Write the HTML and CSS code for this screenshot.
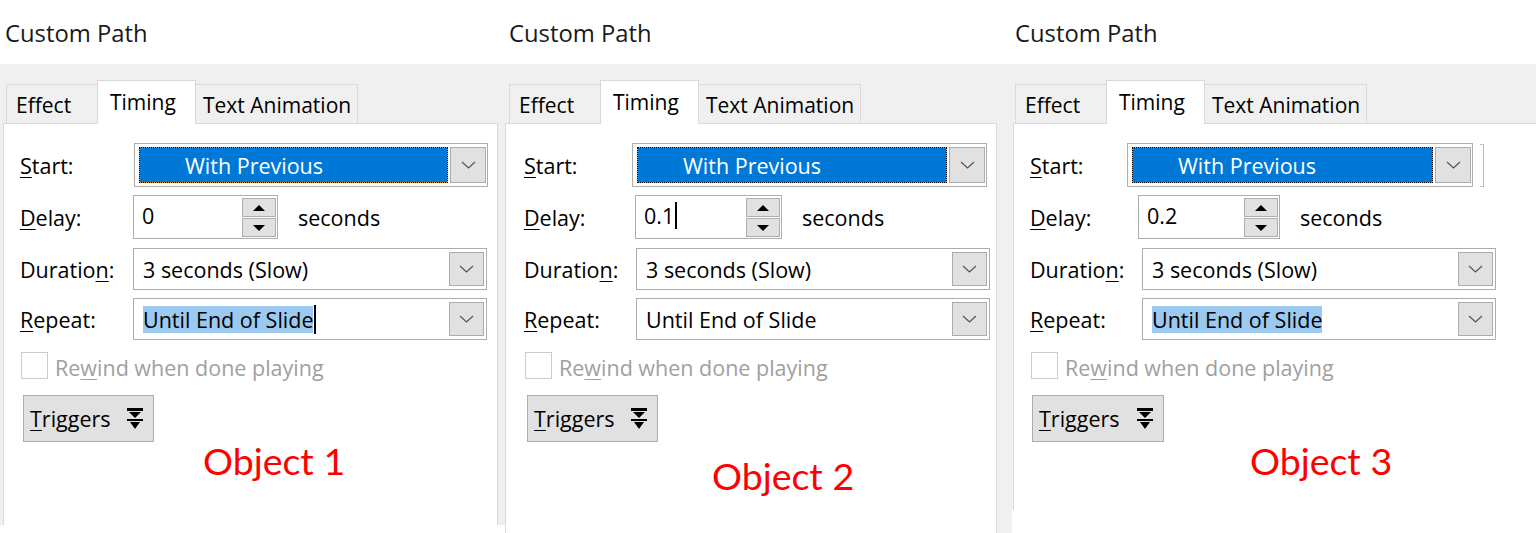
FILE: index.html
```html
<!DOCTYPE html>
<html lang="en">
<head>
<meta charset="utf-8">
<title>Custom Path – Timing</title>
<link rel="stylesheet" href="styles.css">
</head>
<body>
<div class="screen">

  <section class="panel p1">
    <h1 class="title">Custom Path</h1>
    <div class="dialog">
      <div class="tabs">
        <div class="tab tab-effect">Effect</div>
        <div class="tab tab-timing active">Timing</div>
        <div class="tab tab-text">Text Animation</div>
      </div>
      <div class="content">
        <div class="row r-start">
          <span class="lbl"><u>S</u>tart:</span>
          <div class="combo focus">
            <div class="field">With Previous</div>
            <div class="dd-btn"><svg width="15" height="8" viewBox="0 0 15 8"><polyline points="1,1 7.5,7 14,1" fill="none" stroke="#555" stroke-width="1.2"/></svg></div>
          </div>
        </div>
        <div class="row r-delay">
          <span class="lbl"><u>D</u>elay:</span>
          <div class="spin">
            <div class="spin-val">0</div>
            <div class="spin-btns">
              <div class="sb"><svg width="12" height="6" viewBox="0 0 12 6"><polygon points="0,6 12,6 6,0" fill="#000"/></svg></div>
              <div class="sb"><svg width="12" height="6" viewBox="0 0 12 6"><polygon points="0,0 12,0 6,6" fill="#000"/></svg></div>
            </div>
          </div>
          <span class="unit">seconds</span>
        </div>
        <div class="row r-dur">
          <span class="lbl">Duratio<u>n</u>:</span>
          <div class="combo plain">
            <div class="val">3 seconds (Slow)</div>
            <div class="dd-btn"><svg width="15" height="8" viewBox="0 0 15 8"><polyline points="1,1 7.5,7 14,1" fill="none" stroke="#555" stroke-width="1.2"/></svg></div>
          </div>
        </div>
        <div class="row r-rep">
          <span class="lbl"><u>R</u>epeat:</span>
          <div class="combo plain">
            <div class="val"><span class="hl">Until End of Slide</span><span class="caret"></span></div>
            <div class="dd-btn"><svg width="15" height="8" viewBox="0 0 15 8"><polyline points="1,1 7.5,7 14,1" fill="none" stroke="#555" stroke-width="1.2"/></svg></div>
          </div>
        </div>
        <div class="check-row">
          <span class="cb"></span>
          <span class="cb-lbl">Re<u>w</u>ind when done playing</span>
        </div>
        <div class="triggers"><span><u>T</u>riggers</span><svg width="16" height="21" viewBox="0 0 16 21"><rect x="0" y="0" width="16" height="3" fill="#000"/><polygon points="2,4 14,4 8,10" fill="#000"/><rect x="0" y="11" width="16" height="2" fill="#000"/><polygon points="3,14 13,14 8,21" fill="#000"/></svg></div>
        <div class="obj">Object 1</div>
      </div>
    </div>
  </section>

  <section class="panel p2">
    <h1 class="title">Custom Path</h1>
    <div class="dialog">
      <div class="tabs">
        <div class="tab tab-effect">Effect</div>
        <div class="tab tab-timing active">Timing</div>
        <div class="tab tab-text">Text Animation</div>
      </div>
      <div class="content">
        <div class="row r-start">
          <span class="lbl"><u>S</u>tart:</span>
          <div class="combo focus">
            <div class="field">With Previous</div>
            <div class="dd-btn"><svg width="15" height="8" viewBox="0 0 15 8"><polyline points="1,1 7.5,7 14,1" fill="none" stroke="#555" stroke-width="1.2"/></svg></div>
          </div>
        </div>
        <div class="row r-delay">
          <span class="lbl"><u>D</u>elay:</span>
          <div class="spin">
            <div class="spin-val">0.1<span class="caret"></span></div>
            <div class="spin-btns">
              <div class="sb"><svg width="12" height="6" viewBox="0 0 12 6"><polygon points="0,6 12,6 6,0" fill="#000"/></svg></div>
              <div class="sb"><svg width="12" height="6" viewBox="0 0 12 6"><polygon points="0,0 12,0 6,6" fill="#000"/></svg></div>
            </div>
          </div>
          <span class="unit">seconds</span>
        </div>
        <div class="row r-dur">
          <span class="lbl">Duratio<u>n</u>:</span>
          <div class="combo plain">
            <div class="val">3 seconds (Slow)</div>
            <div class="dd-btn"><svg width="15" height="8" viewBox="0 0 15 8"><polyline points="1,1 7.5,7 14,1" fill="none" stroke="#555" stroke-width="1.2"/></svg></div>
          </div>
        </div>
        <div class="row r-rep">
          <span class="lbl"><u>R</u>epeat:</span>
          <div class="combo plain">
            <div class="val">Until End of Slide</div>
            <div class="dd-btn"><svg width="15" height="8" viewBox="0 0 15 8"><polyline points="1,1 7.5,7 14,1" fill="none" stroke="#555" stroke-width="1.2"/></svg></div>
          </div>
        </div>
        <div class="check-row">
          <span class="cb"></span>
          <span class="cb-lbl">Re<u>w</u>ind when done playing</span>
        </div>
        <div class="triggers"><span><u>T</u>riggers</span><svg width="16" height="21" viewBox="0 0 16 21"><rect x="0" y="0" width="16" height="3" fill="#000"/><polygon points="2,4 14,4 8,10" fill="#000"/><rect x="0" y="11" width="16" height="2" fill="#000"/><polygon points="3,14 13,14 8,21" fill="#000"/></svg></div>
        <div class="obj">Object 2</div>
      </div>
    </div>
  </section>

  <section class="panel p3">
    <h1 class="title">Custom Path</h1>
    <div class="dialog">
      <div class="tabs">
        <div class="tab tab-effect">Effect</div>
        <div class="tab tab-timing active">Timing</div>
        <div class="tab tab-text">Text Animation</div>
      </div>
      <div class="content">
        <div class="row r-start">
          <span class="lbl"><u>S</u>tart:</span>
          <div class="combo focus">
            <div class="field">With Previous</div>
            <div class="dd-btn"><svg width="15" height="8" viewBox="0 0 15 8"><polyline points="1,1 7.5,7 14,1" fill="none" stroke="#555" stroke-width="1.2"/></svg></div>
          </div>
          <span class="bracket"></span>
        </div>
        <div class="row r-delay">
          <span class="lbl"><u>D</u>elay:</span>
          <div class="spin">
            <div class="spin-val">0.2</div>
            <div class="spin-btns">
              <div class="sb"><svg width="12" height="6" viewBox="0 0 12 6"><polygon points="0,6 12,6 6,0" fill="#000"/></svg></div>
              <div class="sb"><svg width="12" height="6" viewBox="0 0 12 6"><polygon points="0,0 12,0 6,6" fill="#000"/></svg></div>
            </div>
          </div>
          <span class="unit">seconds</span>
        </div>
        <div class="row r-dur">
          <span class="lbl">Duratio<u>n</u>:</span>
          <div class="combo plain">
            <div class="val">3 seconds (Slow)</div>
            <div class="dd-btn"><svg width="15" height="8" viewBox="0 0 15 8"><polyline points="1,1 7.5,7 14,1" fill="none" stroke="#555" stroke-width="1.2"/></svg></div>
          </div>
        </div>
        <div class="row r-rep">
          <span class="lbl"><u>R</u>epeat:</span>
          <div class="combo plain">
            <div class="val"><span class="hl">Until End of Slide</span></div>
            <div class="dd-btn"><svg width="15" height="8" viewBox="0 0 15 8"><polyline points="1,1 7.5,7 14,1" fill="none" stroke="#555" stroke-width="1.2"/></svg></div>
          </div>
        </div>
        <div class="check-row">
          <span class="cb"></span>
          <span class="cb-lbl">Re<u>w</u>ind when done playing</span>
        </div>
        <div class="triggers"><span><u>T</u>riggers</span><svg width="16" height="21" viewBox="0 0 16 21"><rect x="0" y="0" width="16" height="3" fill="#000"/><polygon points="2,4 14,4 8,10" fill="#000"/><rect x="0" y="11" width="16" height="2" fill="#000"/><polygon points="3,14 13,14 8,21" fill="#000"/></svg></div>
        <div class="obj">Object 3</div>
      </div>
    </div>
  </section>

</div>
</body>
</html>
```

FILE: styles.css
```css
* { box-sizing: border-box; }

body {
  margin: 0;
  background: #fff;
  font-family: "Open Sans", "Noto Sans", sans-serif;
  color: #000;
}

.screen {
  display: flex;
  width: 1536px;
  height: 533px;
  overflow: hidden;
}

.panel {
  display: flex;
  flex-direction: column;
  flex: none;
}
.p1 { width: 505px; }
.p2 { width: 507px; }
.p3 { width: 524px; }

.title {
  margin: 0;
  height: 64px;
  font-weight: 400;
  font-size: 23.8px;
  line-height: 66px;
  color: #1a1a1a;
  padding-left: 5px;
  white-space: nowrap;
}
.p2 .title { padding-left: 4px; }
.p3 .title { padding-left: 3px; }

.dialog {
  background: #f0f0f0;
  display: flex;
  flex-direction: column;
  flex: none;
}
.p1 .dialog { height: 461px; }
.p2 .dialog { height: 469px; }
.p3 .dialog { height: 446px; }

/* tabs */
.tabs {
  display: flex;
  align-items: flex-end;
  height: 59px;
  flex: none;
  padding-left: 6px;
}
.p2 .tabs { padding-left: 4px; }
.p3 .tabs { padding-left: 3px; }

.tab {
  height: 39px;
  border: 1px solid #d9d9d9;
  border-bottom: none;
  font-size: 21px;
  line-height: 40px;
  white-space: nowrap;
  color: #000;
  background: #f0f0f0;
}
.tab-effect { width: 91px; padding-left: 9px; border-right: none; }
.tab-timing { width: 99px; padding-left: 12px; }
.tab-text { width: 162px; padding-left: 7px; border-left: none; }

.tab.active {
  height: 44px;
  background: #fff;
  margin-bottom: -1px;
  position: relative;
  line-height: 42px;
}

/* content */
.content {
  flex: 1;
  background: #fff;
  border: 1px solid #d9d9d9;
  border-bottom: none;
  padding: 19px 0 0 16px;
}
.p1 .content { margin-left: 3px; width: 495px; }
.p2 .content { width: 492px; padding-left: 18px; }
.p3 .content { margin-left: 1px; width: 523px; border-right: none; }

.row {
  display: flex;
  align-items: center;
}
.lbl {
  width: 113px;
  flex: none;
  font-size: 21.5px;
  white-space: nowrap;
  padding-top: 1px;
}
.p2 .lbl, .p3 .lbl { width: 112px; }

u { text-underline-offset: 3px; text-decoration-thickness: 1px; }

.r-delay { margin-top: 8px; }
.r-dur { margin-top: 9px; }
.r-rep { margin-top: 8px; }

/* combos */
.combo {
  display: flex;
  height: 42px;
  width: 354px;
  border: 1px solid #adadad;
  background: #fff;
  padding: 3px 2px 3px 9px;
  gap: 2px;
  font-size: 21.5px;
}
.combo.focus {
  height: 44px;
  padding: 3px 1px 3px 4px;
  margin-left: 1px;
}
.p2 .combo.focus { margin-left: -4px; width: 355px; }
.p3 .combo.focus { margin-left: -15px; width: 346px; }

.field {
  flex: 1;
  background: #0078d7;
  color: #fff;
  border: 1px solid #e8912e;
  outline: 1px dotted #000;
  outline-offset: -1px;
  padding-left: 45px;
  padding-top: 3px;
  line-height: 30px;
  white-space: nowrap;
}

.dd-btn {
  width: 36px;
  flex: none;
  background: #e1e1e1;
  border: 1px solid #adadad;
  display: flex;
  align-items: center;
  justify-content: center;
}
.plain .dd-btn { width: 35px; }

.val {
  flex: 1;
  display: flex;
  align-items: center;
  white-space: nowrap;
  line-height: 27px;
}
.hl { background: #9bc9f0; }
.caret {
  display: inline-block;
  width: 2px;
  height: 29px;
  background: #000;
  margin-left: 1px;
}

/* spinner */
.spin {
  display: flex;
  width: 145px;
  height: 44px;
  border: 1px solid #adadad;
  background: #fff;
  padding: 2px 1px 1px 8px;
}
.p2 .spin { margin-left: -1px; width: 147px; }
.p3 .spin { margin-left: -4px; width: 142px; }

.spin-val {
  flex: 1;
  font-size: 21.5px;
  display: flex;
  align-items: center;
  line-height: 27px;
  padding-bottom: 5px;
}
.spin-val .caret { height: 27px; }

.spin-btns {
  width: 34px;
  flex: none;
  display: flex;
  flex-direction: column;
  gap: 1px;
}
.sb {
  flex: 1;
  background: #e1e1e1;
  border: 1px solid #adadad;
  display: flex;
  align-items: center;
  justify-content: center;
}

.unit {
  margin-left: 20px;
  font-size: 21.5px;
  padding-top: 1px;
}

.bracket {
  width: 4px;
  height: 43px;
  margin-left: 7px;
  border: 1px solid #bdbdbd;
  border-left: none;
}

/* checkbox */
.check-row {
  display: flex;
  align-items: center;
  margin-top: 12px;
  height: 27px;
}
.cb {
  width: 27px;
  height: 27px;
  flex: none;
  border: 1px solid #cccccc;
  background: #fff;
  margin-left: 1px;
  margin-right: 7px;
}
.cb-lbl {
  font-size: 21.5px;
  color: #a0a0a0;
  white-space: nowrap;
  padding-top: 4px;
}

/* triggers */
.triggers {
  margin-top: 16px;
  margin-left: 3px;
  width: 131px;
  height: 47px;
  border: 1px solid #adadad;
  background: #e1e1e1;
  font-size: 21.5px;
  display: flex;
  align-items: center;
  justify-content: space-between;
  padding: 0 10px 0 6px;
}
.p3 .triggers { margin-left: 2px; width: 132px; }

.obj {
  font-family: "Lato", "Carlito", sans-serif;
  font-size: 37.5px;
  line-height: 38px;
  color: #ff0000;
  margin-left: 183px;
  white-space: nowrap;
}
.p2 .obj { margin-left: 188px; margin-top: 15px; }
.p3 .obj { margin-left: 220px; }
```
